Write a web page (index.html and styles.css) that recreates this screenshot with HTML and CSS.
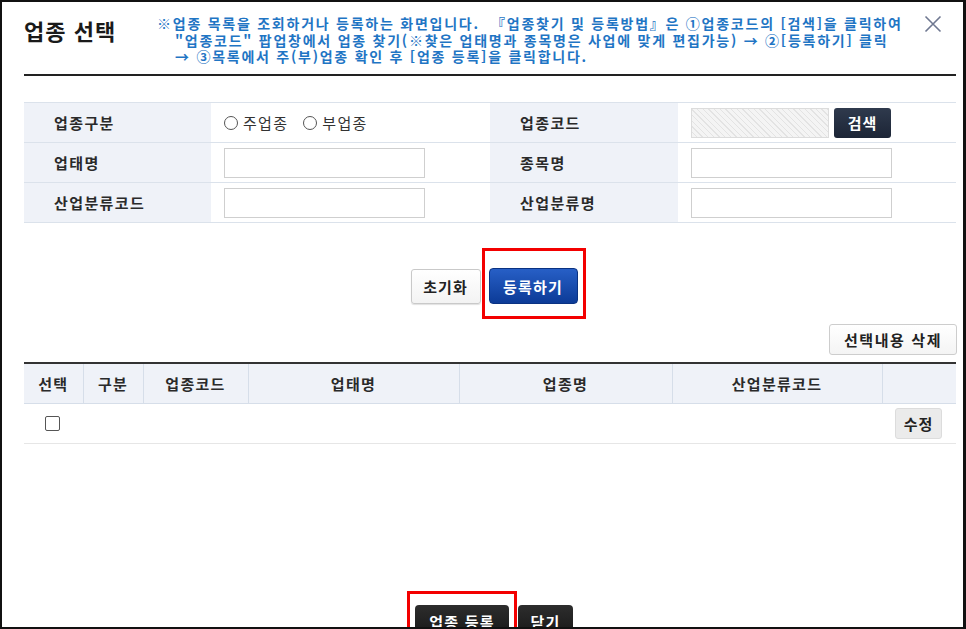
FILE: index.html
```html
<!DOCTYPE html>
<html lang="ko">
<head>
<meta charset="utf-8">
<title>업종 선택</title>
<link rel="stylesheet" href="styles.css">
</head>
<body>
<div class="frame">
  <header class="head">
    <h1 class="title">업종 선택</h1>
    <div class="note">
      <div class="note-line first">※업종 목록을 조회하거나 등록하는 화면입니다.&nbsp; 『업종찾기 및 등록방법』은 ①업종코드의 [검색]을 클릭하여</div>
      <div class="note-line">"업종코드" 팝업창에서 업종 찾기(※찾은 업태명과 종목명은 사업에 맞게 편집가능) → ②[등록하기] 클릭</div>
      <div class="note-line">→ ③목록에서 주(부)업종 확인 후 [업종 등록]을 클릭합니다.</div>
    </div>
    <button class="close" aria-label="닫기">
      <svg width="18" height="18" viewBox="0 0 18 18"><path d="M1.5 1.5 L16.5 16.5 M16.5 1.5 L1.5 16.5" stroke="#6f7891" stroke-width="1.6" fill="none"/></svg>
    </button>
  </header>
  <div class="rule"></div>

  <div class="form">
    <div class="lbl">업종구분</div>
    <div class="val radios">
      <label class="radio"><span class="circle"></span>주업종</label>
      <label class="radio"><span class="circle"></span>부업종</label>
    </div>
    <div class="lbl">업종코드</div>
    <div class="val"><span class="input hatched"></span><button class="btn-search">검색</button></div>

    <div class="lbl">업태명</div>
    <div class="val"><span class="input"></span></div>
    <div class="lbl">종목명</div>
    <div class="val"><span class="input"></span></div>

    <div class="lbl">산업분류코드</div>
    <div class="val"><span class="input"></span></div>
    <div class="lbl">산업분류명</div>
    <div class="val"><span class="input"></span></div>
  </div>

  <div class="actions">
    <button class="btn-reset">초기화</button>
    <span class="hl hl-reg"><button class="btn-register">등록하기</button></span>
  </div>

  <div class="del-row">
    <button class="btn-delete">선택내용 삭제</button>
  </div>

  <table class="list">
    <colgroup>
      <col style="width:59px"><col style="width:60px"><col style="width:105px"><col style="width:211px"><col style="width:213px"><col style="width:210px"><col>
    </colgroup>
    <thead>
      <tr><th>선택</th><th>구분</th><th>업종코드</th><th>업태명</th><th>업종명</th><th>산업분류코드</th><th></th></tr>
    </thead>
    <tbody>
      <tr><td class="chk"><span class="checkbox"></span></td><td></td><td></td><td></td><td></td><td></td><td class="edit"><button class="btn-edit">수정</button></td></tr>
    </tbody>
  </table>

  <div class="bottom">
    <span class="hl hl-bottom"><button class="btn-dark">업종 등록</button></span>
    <button class="btn-dark">닫기</button>
  </div>
</div>
</body>
</html>
```
FILE: styles.css
```css
* { box-sizing: border-box; }
html, body { margin: 0; padding: 0; background: #fff; }
body {
  font-family: "Noto Sans CJK KR", "Noto Sans", "Liberation Sans", sans-serif;
  color: #222;
}
button { font-family: inherit; cursor: pointer; }

.frame {
  width: 966px;
  height: 629px;
  border-top: 2px solid #111;
  border-left: 2px solid #111;
  border-right: 3px solid #111;
  border-bottom: 2px solid #111;
  overflow: hidden;
  padding: 0 7px 0 22px;
}

/* header */
.head {
  height: 72px;
  display: flex;
  align-items: flex-start;
}
.title {
  margin: 13px 0 0 0;
  font-size: 22px;
  font-weight: 700;
  line-height: 30px;
  letter-spacing: 1px;
  width: 133px;
  flex: none;
  color: #1a1a1a;
}
.note {
  flex: 1;
  margin-top: 13px;
  font-size: 14px;
  line-height: 16.5px;
  font-weight: 700;
  color: #1f75c4;
  white-space: nowrap;
  letter-spacing: 1.75px;
}
.note-line { padding-left: 18px; }
.note-line.first { padding-left: 0; }
.close {
  flex: none;
  margin: 13px 14px 0 0;
  padding: 0;
  width: 18px;
  height: 18px;
  border: 0;
  background: none;
  display: flex;
}
.rule {
  height: 2px;
  background: #222;
}

/* form */
.form {
  margin-top: 26px;
  display: grid;
  grid-template-columns: 187px 279px 188px 1fr;
  border-top: 1px solid #dbe2eb;
}
.lbl, .val {
  height: 40px;
  border-bottom: 1px solid #dbe2eb;
  display: flex;
  align-items: center;
}
.lbl {
  background: #eff2f8;
  padding-left: 30px;
  font-size: 15px;
  font-weight: 700;
  letter-spacing: 1.4px;
  color: #2a2a2a;
}
.val { padding-left: 13px; background: #fff; }
.input {
  display: block;
  width: 201px;
  height: 30px;
  border: 1px solid #cfcfcf;
  background: #fff;
}
.input.hatched {
  width: 138px;
  border-color: #dcdcdc;
  background: repeating-linear-gradient(45deg, #f4f4f4 0 3px, #e3e3e3 3px 4px);
}
.btn-search {
  margin-left: 5px;
  width: 57px;
  height: 30px;
  border: 0;
  border-radius: 3px;
  background: linear-gradient(#2f3a4d, #1c2536);
  color: #fff;
  font-size: 15px;
  font-weight: 700;
  letter-spacing: 1px;
  padding: 0;
}
.radios { gap: 15px; }
.radio {
  display: flex;
  align-items: center;
  font-size: 15px;
  letter-spacing: 1.3px;
  color: #333;
}
.circle {
  width: 14px;
  height: 14px;
  border: 1px solid #555;
  border-radius: 50%;
  margin-right: 5px;
}

/* action buttons */
.actions {
  margin-top: 45px;
  display: flex;
  justify-content: center;
  align-items: flex-start;
  padding-left: 8px;
  gap: 8px;
}
.btn-reset {
  margin-top: 1px;
  width: 70px;
  height: 35px;
  background: linear-gradient(#fff, #f3f3f3);
  border: 1px solid #c9c9c9;
  border-radius: 3px;
  box-shadow: 0 1px 1px rgba(0,0,0,0.12);
  font-size: 15px;
  font-weight: 700;
  letter-spacing: 1px;
  color: #222;
  padding: 0;
}
.btn-register {
  display: block;
  width: 89px;
  height: 36px;
  border: 1px solid #0a3282;
  border-radius: 4px;
  background: linear-gradient(#275fc6, #0c3b97);
  color: #fff;
  font-size: 15px;
  font-weight: 700;
  letter-spacing: 1.2px;
  padding: 0;
}
.hl { position: relative; display: inline-block; }
.hl::after {
  content: "";
  position: absolute;
  border: 3px solid #f30000;
  pointer-events: none;
}
.hl-reg::after { top: -20px; bottom: -15px; left: -7px; right: -8px; }
.hl-bottom::after { top: -14px; bottom: -40px; left: -8px; right: -8px; }

/* delete row */
.del-row {
  margin-top: 20px;
  display: flex;
  justify-content: flex-end;
}
.btn-delete {
  width: 128px;
  height: 31px;
  margin-right: -1px;
  background: linear-gradient(#fff, #f4f4f4);
  border: 1px solid #cdcdcd;
  border-radius: 3px;
  font-size: 15px;
  font-weight: 700;
  letter-spacing: 1.6px;
  color: #222;
  padding: 0;
}

/* list table */
.list {
  margin-top: 7px;
  width: 100%;
  border-collapse: collapse;
  table-layout: fixed;
  border-top: 2px solid #333;
}
.list th {
  height: 40px;
  background: #eff2f8;
  border-left: 1px solid #d6dee9;
  border-bottom: 1px solid #d6dee9;
  font-size: 15px;
  font-weight: 700;
  letter-spacing: 1.3px;
  color: #2a2a2a;
  padding: 0;
}
.list th:first-child { border-left: 0; }
.list td {
  height: 40px;
  border-bottom: 1px solid #e6e6e6;
  padding: 0;
}
.list td.chk { padding-left: 21px; }
.checkbox {
  display: block;
  width: 15px;
  height: 15px;
  border: 1.5px solid #555;
  border-radius: 2px;
}
.list td.edit { text-align: right; padding-right: 14px; }
.btn-edit {
  width: 47px;
  height: 31px;
  background: #ebebeb;
  border: 1px solid #dcdcdc;
  border-radius: 3px;
  font-size: 15px;
  font-weight: 700;
  letter-spacing: 1px;
  color: #222;
  padding: 0;
}

/* bottom buttons */
.bottom {
  margin-top: 161px;
  display: flex;
  justify-content: center;
  padding-left: 8px;
  gap: 9px;
}
.btn-dark {
  height: 34px;
  padding: 0 13px;
  background: linear-gradient(#2d2d2d, #161616);
  border: 0;
  border-radius: 4px;
  color: #fff;
  font-size: 15px;
  font-weight: 700;
  letter-spacing: 1.2px;
}
.hl-bottom .btn-dark { display: block; width: 94px; }
.bottom > .btn-dark { width: 55px; padding: 0; }
```
